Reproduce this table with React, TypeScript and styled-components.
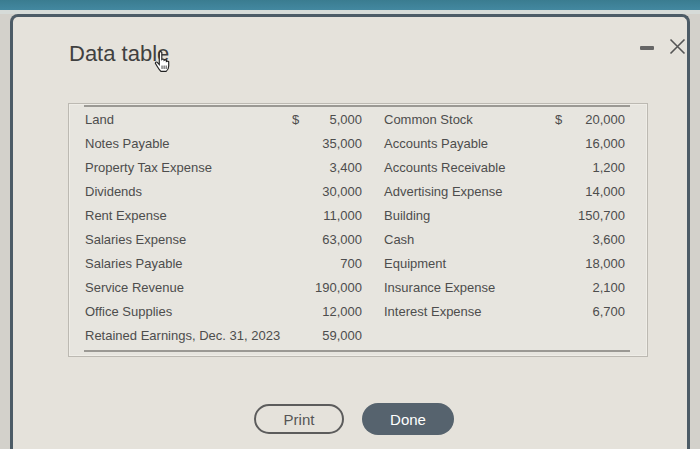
import React from 'react'
import styled, { createGlobalStyle } from 'styled-components'

const GlobalStyle = createGlobalStyle`
    html, body {
        margin: 0;
        padding: 0;
        background: #d3d1cb;
        overflow: hidden;
        font-family: "Liberation Sans", Arial, sans-serif;
    }
`

const Page = styled.div`
    width: 700px;
    height: 449px;
    display: flex;
    flex-direction: column;
    overflow: hidden;
`

const TopBar = styled.div`
    height: 10px;
    flex-shrink: 0;
    background: linear-gradient(#3a7c90, #4388a0);
`

const Strip = styled.div`
    height: 4px;
    flex-shrink: 0;
    background: #d6dbd8;
`

const Dialog = styled.div`
    flex: 1;
    margin: 0 10px;
    border: 3px solid #4c5b66;
    border-bottom: none;
    border-radius: 8px 8px 0 0;
    background: #e5e2db;
    padding: 23px 1px 0 55px;
    display: flex;
    flex-direction: column;
`

const Header = styled.div`
    display: flex;
    justify-content: space-between;
    align-items: flex-start;
`

const Title = styled.div`
    position: relative;
    padding-left: 1px;
    font-size: 22px;
    line-height: 28px;
    color: #404040;
`

const Cursor = styled.svg`
    position: absolute;
    left: 85px;
    top: 10px;
`

const Controls = styled.div`
    display: flex;
    align-items: center;
    gap: 15px;
    margin-top: -3px;
    height: 18px;
`

const Minimize = styled.div`
    width: 14px;
    height: 4px;
    margin-top: 3px;
    border-radius: 1px;
    background: #666;
`

const Box = styled.div`
    width: 580px;
    box-sizing: border-box;
    margin-top: 35px;
    padding: 1px 17px 4px 15px;
    border: 1px solid #bcb9b2;
    box-shadow: inset 0 0 0 1px #efede7;
    background: #e7e5df;
`

const Table = styled.div`
    display: grid;
    grid-template-columns: 208px 10px 60px 22px 171px 10px 60px 5px;
    grid-auto-rows: 24px;
    border-top: 2px solid #9b9994;
    border-bottom: 2px solid #9b9994;
    padding-bottom: 3px;
    font-size: 13px;
    color: #4d4d4d;
`

const Cell = styled.div<{ $align?: 'left' | 'right'; $pad?: number }>`
    display: flex;
    align-items: center;
    justify-content: ${p => (p.$align === 'right' ? 'flex-end' : 'flex-start')};
    padding-left: ${p => p.$pad || 0}px;
    white-space: nowrap;
`

const Buttons = styled.div`
    width: 580px;
    box-sizing: border-box;
    padding-right: 8px;
    margin-top: 46px;
    display: flex;
    justify-content: center;
    align-items: center;
    gap: 18px;
`

const Button = styled.button<{ $primary?: boolean }>`
    box-sizing: border-box;
    width: ${p => (p.$primary ? 92 : 90)}px;
    height: ${p => (p.$primary ? 32 : 30)}px;
    border-radius: 16px;
    border: ${p => (p.$primary ? 'none' : '2px solid #5c5c5c')};
    background: ${p => (p.$primary ? '#56636e' : 'transparent')};
    color: ${p => (p.$primary ? '#fff' : '#555')};
    font-family: "Liberation Sans", Arial, sans-serif;
    font-size: 15px;
    padding: 0;
`

const left = [
    ['Land', true, '5,000'],
    ['Notes Payable', false, '35,000'],
    ['Property Tax Expense', false, '3,400'],
    ['Dividends', false, '30,000'],
    ['Rent Expense', false, '11,000'],
    ['Salaries Expense', false, '63,000'],
    ['Salaries Payable', false, '700'],
    ['Service Revenue', false, '190,000'],
    ['Office Supplies', false, '12,000'],
    ['Retained Earnings, Dec. 31, 2023', false, '59,000'],
] as const

const right = [
    ['Common Stock', true, '20,000'],
    ['Accounts Payable', false, '16,000'],
    ['Accounts Receivable', false, '1,200'],
    ['Advertising Expense', false, '14,000'],
    ['Building', false, '150,700'],
    ['Cash', false, '3,600'],
    ['Equipment', false, '18,000'],
    ['Insurance Expense', false, '2,100'],
    ['Interest Expense', false, '6,700'],
] as const

function HandCursor() {
    return (
        <Cursor width="19" height="23" viewBox="0 0 16 20">
            <path
                d="M5.2 2 Q6.3 0.8 7.4 2 L7.4 8.2 Q8.4 7.4 9.4 8.2 L9.4 9 Q10.4 8.3 11.4 9 L11.4 10 Q12.4 9.3 13.4 10.2 L13.4 14 Q13.4 17 11.2 18.6 L6.6 18.6 Q5 17 3.6 14.6 L1.8 11.6 Q1.8 10 3.2 10.6 L5.2 12.6 Z"
                fill="#fff"
                stroke="#222"
                strokeWidth="1"
            />
            <path d="M7.6 13.5 V16.5 M9.4 13.5 V16.5 M11.2 13.5 V16.5" stroke="#333" strokeWidth="0.8" />
        </Cursor>
    )
}

export default function App() {
    return (
        <Page>
            <GlobalStyle />
            <TopBar />
            <Strip />
            <Dialog>
                <Header>
                    <Title>
                        Data table
                        <HandCursor />
                    </Title>
                    <Controls>
                        <Minimize />
                        <svg width="17" height="17" viewBox="0 0 17 17">
                            <path d="M1.5 1.5 L15.5 15.5 M15.5 1.5 L1.5 15.5" stroke="#555" strokeWidth="1.6" />
                        </svg>
                    </Controls>
                </Header>
                <Box>
                    <Table>
                        {left.map((row, i) => {
                            const r = right[i]
                            return (
                                <React.Fragment key={i}>
                                    <Cell $pad={1}>{row[0]}</Cell>
                                    <Cell>{row[1] ? '$' : ''}</Cell>
                                    <Cell $align="right">{row[2]}</Cell>
                                    <Cell />
                                    <Cell>{r ? r[0] : ''}</Cell>
                                    <Cell>{r && r[1] ? '$' : ''}</Cell>
                                    <Cell $align="right">{r ? r[2] : ''}</Cell>
                                    <Cell />
                                </React.Fragment>
                            )
                        })}
                    </Table>
                </Box>
                <Buttons>
                    <Button>Print</Button>
                    <Button $primary>Done</Button>
                </Buttons>
            </Dialog>
        </Page>
    )
}
